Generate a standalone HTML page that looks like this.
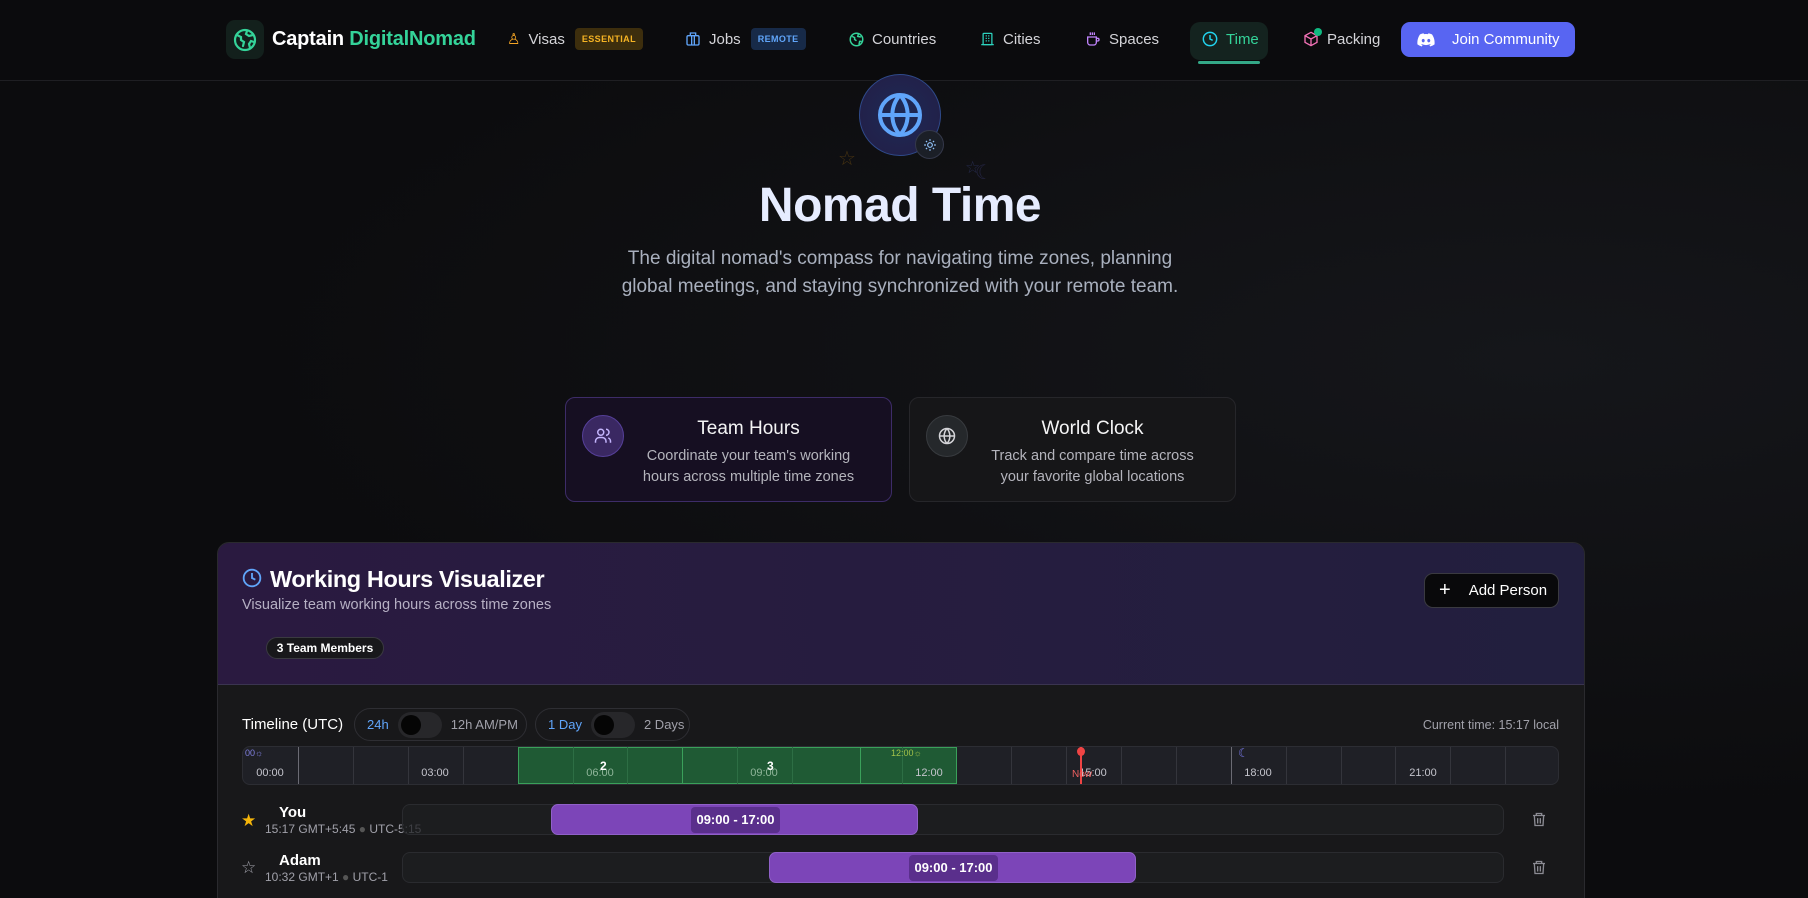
<!DOCTYPE html>
<html><head><meta charset="utf-8">
<style>
*{box-sizing:border-box;margin:0;padding:0}
html,body{width:1808px;height:898px;overflow:hidden}
body{background:radial-gradient(ellipse at 85% 40%,#15161a 0%,#0c0c0e 60%) ,#0b0b0d;font-family:"Liberation Sans",sans-serif;color:#e5e7eb;position:relative}
.abs{position:absolute}
.nav{position:absolute;left:0;top:0;width:1808px;height:81px;border-bottom:1px solid #1f1f23;background:#0b0b0d}
.ni{position:absolute;top:28px;font-size:15px;color:#d4d4d8;display:flex;align-items:center;gap:8px;height:22px;white-space:nowrap}
.badge{font-size:9px;font-weight:bold;letter-spacing:.4px;padding:6px 7px;border-radius:4px}
.card{position:absolute;top:397px;width:327px;height:105px;border-radius:10px;text-align:center}
.card h3{font-size:19px;font-weight:normal;margin-top:20px;color:#f4f4f5}
.card p{font-size:14.5px;line-height:21px;color:#b4b4bc;margin-top:6px}
.ci{position:absolute;left:16px;top:17px;width:42px;height:42px;border-radius:50%;display:flex;align-items:center;justify-content:center}
.tog{position:absolute;top:708px;height:33px;border:1px solid #2e2e33;border-radius:17px;font-size:13px;display:flex;align-items:center;color:#a1a1aa;white-space:nowrap}
.sw{width:44px;height:26px;border-radius:13px;background:#27272a;position:relative;margin:0 9px;flex:none}
.sw:before{content:"";position:absolute;left:3px;top:3px;width:20px;height:20px;border-radius:50%;background:#050505}
.tl{position:absolute;left:242px;top:746px;width:1317px;height:39px;border-radius:8px;background:#1f2026;border:1px solid #2c2d33;overflow:hidden}
.hr{position:absolute;top:0;height:39px;border-left:1px solid #34353c}
.lb{position:absolute;top:20px;font-size:11px;color:#c4c4cc;transform:translateX(-50%)}
.row{position:absolute;left:402px;width:1102px;height:31px;border-radius:8px;background:rgba(30,31,34,.75);border:1px solid #2a2b2f}
.pb{position:absolute;top:-1px;height:31px;width:367px;border-radius:7px;background:#7c45b8;border:1px solid #9061c8}
.pl{position:absolute;top:2px;height:26px;width:89px;border-radius:4px;background:#5a2f8c;font-size:13px;color:#fff;text-align:center;line-height:26px;font-weight:bold}
</style></head><body>
<div class="nav">
 <div class="abs" style="left:226px;top:20px;width:38px;height:39px;border-radius:9px;background:#13201c;display:flex;align-items:center;justify-content:center">
  <svg width="24" height="24" viewBox="0 0 24 24" fill="none" stroke="#34d399" stroke-width="2.2" stroke-linecap="round"><circle cx="12" cy="12" r="10"/><path d="M4 7l4 2v3l3 2-1 4M14 3l-1 3 3 2 4-1M21 14l-3-1-2 3 1 4"/></svg></div>
 <div class="abs" style="left:272px;top:28px;font-size:20px;font-weight:bold;color:#fff;letter-spacing:-.2px">Captain <span style="color:#34d399">DigitalNomad</span></div>
 <div class="ni" style="left:507px"><span style="color:#f5a524">♙</span>Visas<span class="badge" style="background:#3d2e0d;color:#f5b324;margin-left:2px">ESSENTIAL</span></div>
 <div class="ni" style="left:685px"><svg width="16" height="16" viewBox="0 0 24 24" fill="none" stroke="#60a5fa" stroke-width="2"><rect x="3" y="7" width="18" height="14" rx="2"/><path d="M8 7V3h8v4M10 7v14M14 7v14"/></svg>Jobs<span class="badge" style="background:#172a48;color:#60a5fa;margin-left:2px">REMOTE</span></div>
 <div class="ni" style="left:849px"><svg width="15" height="15" viewBox="0 0 24 24" fill="none" stroke="#34d399" stroke-width="2.4"><circle cx="12" cy="12" r="10"/><path d="M5 7l4 2v3l3 2M15 3l-1 4 5 1M20 15l-3 0-1 5"/></svg>Countries</div>
 <div class="ni" style="left:980px"><svg width="15" height="16" viewBox="0 0 24 24" fill="none" stroke="#2dd4bf" stroke-width="2"><rect x="5" y="3" width="14" height="18" rx="1"/><path d="M9 7h2M13 7h2M9 11h2M13 11h2M9 15h2M13 15h2M2 21h20"/></svg>Cities</div>
 <div class="ni" style="left:1085px"><svg width="16" height="16" viewBox="0 0 24 24" fill="none" stroke="#c084fc" stroke-width="2"><path d="M4 9h13v8a4 4 0 0 1-4 4H8a4 4 0 0 1-4-4zM17 11h2a2 2 0 0 1 0 4h-2M8 2v4M11 2v4M14 2v4"/></svg>Spaces</div>
 <div class="abs" style="left:1190px;top:22px;width:78px;height:38px;border-radius:10px;background:#14231f"></div>
 <div class="abs" style="left:1198px;top:61px;width:62px;height:3px;background:#34a887;border-radius:2px"></div>
 <div class="ni" style="left:1202px;color:#34d399"><svg width="16" height="16" viewBox="0 0 24 24" fill="none" stroke="#22d3ee" stroke-width="2.2"><circle cx="12" cy="12" r="10"/><path d="M12 6v6l4 2"/></svg>Time</div>
 <div class="ni" style="left:1303px"><svg width="16" height="16" viewBox="0 0 24 24" fill="none" stroke="#f472b6" stroke-width="2"><path d="M12 2l9 5v10l-9 5-9-5V7zM3 7l9 5 9-5M12 12v10"/></svg>Packing</div>
 <div class="abs" style="left:1314px;top:28px;width:8px;height:8px;border-radius:50%;background:#10b981"></div>
 <div class="abs" style="left:1401px;top:22px;width:174px;height:35px;border-radius:9px;background:#5865f2;color:#fff;font-size:15px;display:flex;align-items:center;padding-left:16px;gap:17px">
  <svg width="18" height="14" viewBox="0 0 24 18" fill="#fff"><path d="M20 1.5A19 19 0 0 0 15.3 0l-.6 1.2a18 18 0 0 0-5.4 0L8.7 0A19 19 0 0 0 4 1.5C1 6 .2 10.4.6 14.8A19 19 0 0 0 6.3 17.7l1.2-2a12 12 0 0 1-1.9-.9l.5-.4a13.5 13.5 0 0 0 11.8 0l.5.4-1.9.9 1.2 2a19 19 0 0 0 5.7-2.9c.5-5.1-.8-9.5-3.4-13.3zM8.3 12.1c-1.1 0-2-1-2-2.3s.9-2.3 2-2.3 2 1 2 2.3-.9 2.3-2 2.3zm7.4 0c-1.1 0-2-1-2-2.3s.9-2.3 2-2.3 2 1 2 2.3-.9 2.3-2 2.3z"/></svg>Join Community</div>
</div>
<!-- hero -->
<div class="abs" style="left:859px;top:74px;width:82px;height:82px;border-radius:50%;background:radial-gradient(circle,#1e2a55,#231d45);border:1px solid #2f4a8a;z-index:0"></div>
<div class="abs" style="left:876px;top:91px"><svg width="48" height="48" viewBox="0 0 24 24" fill="none" stroke="#60a5fa" stroke-width="2"><circle cx="12" cy="12" r="10"/><path d="M2 12h20M12 2a15 15 0 0 1 0 20M12 2a15 15 0 0 0 0 20"/></svg></div>
<div class="abs" style="left:915px;top:130px;width:29px;height:29px;border-radius:50%;background:#1b1f27;border:1px solid #34384a;display:flex;align-items:center;justify-content:center"><svg width="14" height="14" viewBox="0 0 24 24" fill="none" stroke="#93c5fd" stroke-width="2"><circle cx="12" cy="12" r="4"/><path d="M12 2v3M12 19v3M2 12h3M19 12h3M5 5l2 2M17 17l2 2M5 19l2-2M17 7l2-2"/></svg></div>
<div class="abs" style="left:838px;top:146px;color:#4a3512;font-size:20px">☆</div>
<div class="abs" style="left:965px;top:158px;color:#252a4a;font-size:17px">☆</div>
<div class="abs" style="left:975px;top:160px;color:#23233f;font-size:20px">☾</div>
<div class="abs" style="left:0;top:178px;width:1800px;text-align:center;font-size:48px;font-weight:bold;color:#e6ecff;letter-spacing:-.5px">Nomad Time</div>
<div class="abs" style="left:0;top:245px;width:1800px;text-align:center;font-size:19px;line-height:28px;color:#a9b0be">The digital nomad's compass for navigating time zones, planning<br>global meetings, and staying synchronized with your remote team.</div>
<!-- cards -->
<div class="card" style="left:565px;background:#160f22;border:1px solid #3d2c68">
 <div class="ci" style="background:#3a2862;border:1px solid #56409a"><svg width="18" height="18" viewBox="0 0 24 24" fill="none" stroke="#c4b5fd" stroke-width="2"><circle cx="9" cy="7" r="4"/><path d="M2 21v-2a5 5 0 0 1 5-5h4a5 5 0 0 1 5 5v2M16 3a4 4 0 0 1 0 8M22 21v-2a5 5 0 0 0-3-4.5"/></svg></div>
 <h3 style="padding-left:40px">Team Hours</h3><p style="padding-left:40px">Coordinate your team's working<br>hours across multiple time zones</p></div>
<div class="card" style="left:909px;background:#161618;border:1px solid #26262a">
 <div class="ci" style="background:#25282b;border:1px solid #383b3f"><svg width="18" height="18" viewBox="0 0 24 24" fill="none" stroke="#d4d4d8" stroke-width="2"><circle cx="12" cy="12" r="10"/><path d="M2 12h20M12 2a15 15 0 0 1 0 20M12 2a15 15 0 0 0 0 20"/></svg></div>
 <h3 style="padding-left:40px">World Clock</h3><p style="padding-left:40px">Track and compare time across<br>your favorite global locations</p></div>
<!-- panel -->
<div class="abs" style="left:217px;top:542px;width:1368px;height:370px;border-radius:12px 12px 0 0;background:#18181a;border:1px solid #2a2a2e;overflow:hidden">
 <div style="height:142px;background:linear-gradient(90deg,#2a1a40,#221f3e);border-bottom:1px solid #3a3450"></div>
</div>
<div class="abs" style="left:242px;top:568px"><svg width="20" height="20" viewBox="0 0 24 24" fill="none" stroke="#60a5fa" stroke-width="2.2"><circle cx="12" cy="12" r="10"/><path d="M12 6v6l4 2"/></svg></div>
<div class="abs" style="left:270px;top:566px;font-size:23.5px;font-weight:bold;color:#fff;letter-spacing:-.4px">Working Hours Visualizer</div>
<div class="abs" style="left:242px;top:597px;font-size:14.5px;color:#b6b0c4">Visualize team working hours across time zones</div>
<div class="abs" style="left:266px;top:637px;width:118px;height:22px;border-radius:11px;background:#18181b;border:1px solid #3a3a40;font-size:12px;font-weight:bold;color:#fff;text-align:center;line-height:20px">3 Team Members</div>
<div class="abs" style="left:1424px;top:573px;width:135px;height:35px;border-radius:9px;background:#09090b;border:1px solid #3a3a40;color:#fff;font-size:15px;display:flex;align-items:center;padding-left:14px;gap:18px"><span style="font-size:20px;font-weight:300">+</span>Add Person</div>
<div class="abs" style="left:242px;top:716px;font-size:15px;color:#fff">Timeline (UTC)</div>
<div class="tog" style="left:354px;width:173px;padding-left:12px"><span style="color:#60a5fa">24h</span><div class="sw"></div>12h AM/PM</div>
<div class="tog" style="left:535px;width:155px;padding-left:12px"><span style="color:#60a5fa">1 Day</span><div class="sw"></div>2 Days</div>
<div class="abs" style="left:1300px;top:718px;width:259px;text-align:right;font-size:12.5px;color:#a1a1aa">Current time: 15:17 local</div>
<div class="tl">
 <div class="abs" style="left:275px;top:0;width:439px;height:37px;background:#1f5a34;border:1px solid #3aa05a"></div>
 <div class="hr" style="left:55px;border-color:#6b6b74"></div><div class="hr" style="left:110px"></div><div class="hr" style="left:165px"></div><div class="hr" style="left:220px"></div><div class="hr" style="left:330px;border-color:#2d6e44"></div><div class="hr" style="left:384px;border-color:#2d6e44"></div><div class="hr" style="left:439px;border-color:#3aa05a"></div><div class="hr" style="left:494px;border-color:#2d6e44"></div><div class="hr" style="left:549px;border-color:#2d6e44"></div><div class="hr" style="left:617px;border-color:#3aa05a"></div><div class="hr" style="left:659px;border-color:#2d6e44"></div><div class="hr" style="left:768px"></div><div class="hr" style="left:823px"></div><div class="hr" style="left:878px"></div><div class="hr" style="left:933px"></div><div class="hr" style="left:988px;border-color:#6b6b74"></div><div class="hr" style="left:1043px"></div><div class="hr" style="left:1098px"></div><div class="hr" style="left:1152px"></div><div class="hr" style="left:1207px"></div><div class="hr" style="left:1262px"></div>
 <div class="lb" style="left:27px">00:00</div><div class="lb" style="left:192px">03:00</div><div class="lb" style="left:357px;color:#8fb59a">06:00</div><div class="lb" style="left:521px;color:#8fb59a">09:00</div><div class="lb" style="left:686px">12:00</div><div class="lb" style="left:850px">15:00</div><div class="lb" style="left:1015px">18:00</div><div class="lb" style="left:1180px">21:00</div>
 <div class="abs" style="left:357px;top:12px;font-size:12px;font-weight:bold;color:#fff">2</div>
 <div class="abs" style="left:524px;top:12px;font-size:12px;font-weight:bold;color:#fff">3</div>
 <div class="abs" style="left:2px;top:1px;font-size:9px;color:#8080e0">00☼</div>
 <div class="abs" style="left:648px;top:1px;font-size:9px;color:#a3c24a">12:00☼</div>
 <div class="abs" style="left:995px;top:-1px;font-size:12px;color:#7c7cf0">☾</div>
 <div class="abs" style="left:837px;top:0;width:2px;height:39px;background:#ef4444"></div>
 <div class="abs" style="left:834px;top:0;width:8px;height:9px;border-radius:50%;background:#ef4444"></div>
 <div class="abs" style="left:829px;top:22px;font-size:10px;color:#ef6060">Now</div>
</div>
<!-- rows -->
<div class="abs" style="left:241px;top:811px;color:#f5b50a;font-size:17px">★</div>
<div class="abs" style="left:279px;top:804px;font-size:15px;color:#fff;font-weight:bold">You</div>
<div class="abs" style="left:265px;top:822px;font-size:12px;color:#a1a1aa;white-space:nowrap">15:17 GMT+5:45 <span style="color:#555">●</span> UTC-5:15</div>
<div class="row" style="top:804px"><div class="pb" style="left:148px"><div class="pl" style="left:139px">09:00 - 17:00</div></div></div>
<div class="abs" style="left:241px;top:858px;color:#a1a1aa;font-size:17px">☆</div>
<div class="abs" style="left:279px;top:852px;font-size:15px;color:#fff;font-weight:bold">Adam</div>
<div class="abs" style="left:265px;top:870px;font-size:12px;color:#a1a1aa">10:32 GMT+1 <span style="color:#555">●</span> UTC-1</div>
<div class="row" style="top:852px"><div class="pb" style="left:366px"><div class="pl" style="left:139px">09:00 - 17:00</div></div></div>
<div class="abs" style="left:1531px;top:811px"><svg width="16" height="17" viewBox="0 0 24 24" fill="none" stroke="#8b8b93" stroke-width="2"><path d="M3 6h18M8 6V3h8v3M5 6l1 15h12l1-15M10 10v8M14 10v8"/></svg></div>
<div class="abs" style="left:1531px;top:859px"><svg width="16" height="17" viewBox="0 0 24 24" fill="none" stroke="#8b8b93" stroke-width="2"><path d="M3 6h18M8 6V3h8v3M5 6l1 15h12l1-15M10 10v8M14 10v8"/></svg></div>
</body></html>
